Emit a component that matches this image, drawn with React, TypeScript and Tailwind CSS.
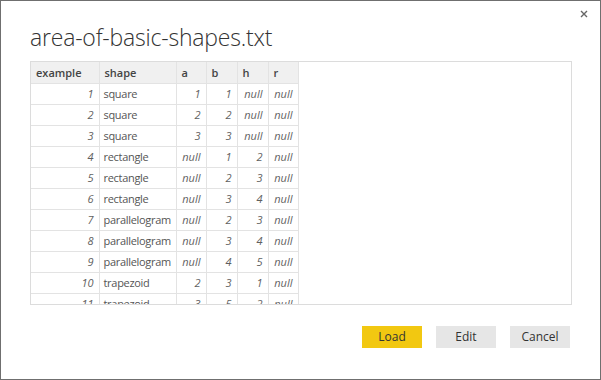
import React from 'react';

type Row = {
  example: number;
  shape: string;
  a: number | null;
  b: number | null;
  h: number | null;
  r: number | null;
};

const rows: Row[] = [
  { example: 1, shape: 'square', a: 1, b: 1, h: null, r: null },
  { example: 2, shape: 'square', a: 2, b: 2, h: null, r: null },
  { example: 3, shape: 'square', a: 3, b: 3, h: null, r: null },
  { example: 4, shape: 'rectangle', a: null, b: 1, h: 2, r: null },
  { example: 5, shape: 'rectangle', a: null, b: 2, h: 3, r: null },
  { example: 6, shape: 'rectangle', a: null, b: 3, h: 4, r: null },
  { example: 7, shape: 'parallelogram', a: null, b: 2, h: 3, r: null },
  { example: 8, shape: 'parallelogram', a: null, b: 3, h: 4, r: null },
  { example: 9, shape: 'parallelogram', a: null, b: 4, h: 5, r: null },
  { example: 10, shape: 'trapezoid', a: 2, b: 3, h: 1, r: null },
  { example: 11, shape: 'trapezoid', a: 3, b: 5, h: 2, r: null },
];

const headers = ['example', 'shape', 'a', 'b', 'h', 'r'];

const NumCell = ({ value }: { value: number | null }) => (
  <td className="border-r border-b border-[#e3e3e3] px-[5px] text-right italic text-[#5f5f5f]">
    {value === null ? 'null' : value}
  </td>
);

const App = () => {
  return (
    <div
      className="relative w-[601px] h-[380px] overflow-hidden border border-[#6f6f6f] bg-white"
      style={{ fontFamily: '"Open Sans", "Noto Sans", sans-serif' }}
    >
      {/* close */}
      <button className="absolute right-[11px] top-[8px] w-[10px] h-[10px] flex items-center justify-center">
        <svg width="8" height="8" viewBox="0 0 8 8">
          <path d="M1 1 L7 7 M7 1 L1 7" stroke="#666" strokeWidth="1.4" />
        </svg>
      </button>

      <div className="flex flex-col pl-[29px] pr-[28px]">
        <h1 className="mt-[20px] h-[40px] text-[23px] font-light leading-[32px] text-[#333] tracking-[-0.2px]">
          area-of-basic-shapes.txt
        </h1>

        <div className="h-[244px] border border-[#dcdcdc] overflow-hidden">
          <table className="table-fixed border-collapse w-[267px] text-[11px] leading-[19px]">
            <colgroup>
              <col className="w-[68px]" />
              <col className="w-[77px]" />
              <col className="w-[30px]" />
              <col className="w-[31px]" />
              <col className="w-[31px]" />
              <col className="w-[30px]" />
            </colgroup>
            <thead>
              <tr className="h-[21px] bg-[#f0f0f0]">
                {headers.map((h) => (
                  <th
                    key={h}
                    className="border-r border-b border-[#e3e3e3] px-[5px] text-left font-semibold text-[#444]"
                  >
                    {h}
                  </th>
                ))}
              </tr>
            </thead>
            <tbody>
              {rows.map((row) => (
                <tr key={row.example} className="h-[21px]">
                  <NumCell value={row.example} />
                  <td className="border-r border-b border-[#e3e3e3] pl-[4px] pr-0 text-left text-[#555] tracking-[-0.3px] whitespace-nowrap">
                    {row.shape}
                  </td>
                  <NumCell value={row.a} />
                  <NumCell value={row.b} />
                  <NumCell value={row.h} />
                  <NumCell value={row.r} />
                </tr>
              ))}
            </tbody>
          </table>
        </div>

        <div className="mt-[21px] flex justify-end gap-[14px] pr-[2px] text-[12px] text-[#333]">
          <button className="w-[60px] h-[22px] bg-[#f2c811]">Load</button>
          <button className="w-[60px] h-[22px] bg-[#e6e6e6]">Edit</button>
          <button className="w-[60px] h-[22px] bg-[#e6e6e6]">Cancel</button>
        </div>
      </div>
    </div>
  );
};

export default App;
